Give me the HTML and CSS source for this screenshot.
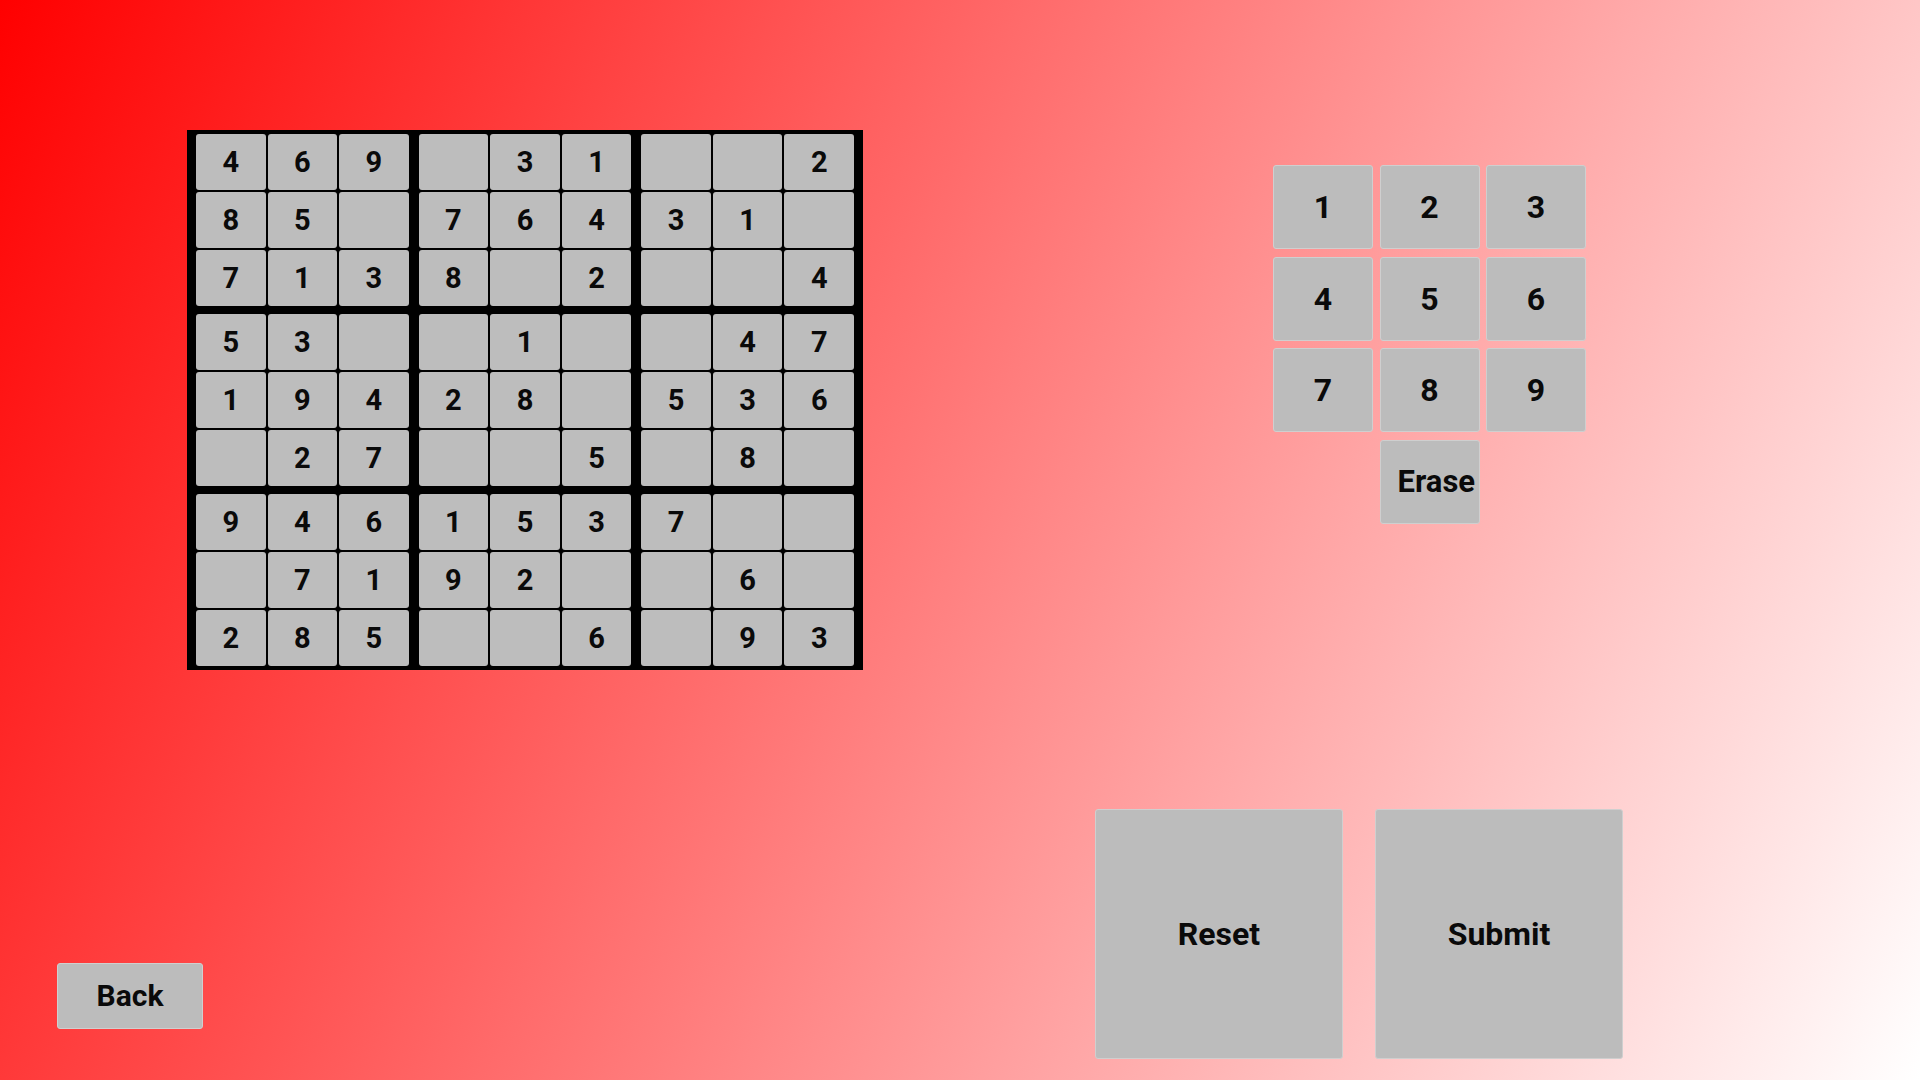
FILE: index.html
```html
<!DOCTYPE html>
<html>
<head>
<meta charset="utf-8">
<title>Sudoku</title>
<link rel="stylesheet" href="styles.css">
</head>
<body>
<div class="screen">
  <div class="top">
    <div class="board">
      <div class="box">
        <div class="cell">4</div><div class="cell">6</div><div class="cell">9</div>
        <div class="cell">8</div><div class="cell">5</div><div class="cell"></div>
        <div class="cell">7</div><div class="cell">1</div><div class="cell">3</div>
      </div>
      <div class="box">
        <div class="cell"></div><div class="cell">3</div><div class="cell">1</div>
        <div class="cell">7</div><div class="cell">6</div><div class="cell">4</div>
        <div class="cell">8</div><div class="cell"></div><div class="cell">2</div>
      </div>
      <div class="box">
        <div class="cell"></div><div class="cell"></div><div class="cell">2</div>
        <div class="cell">3</div><div class="cell">1</div><div class="cell"></div>
        <div class="cell"></div><div class="cell"></div><div class="cell">4</div>
      </div>
      <div class="box">
        <div class="cell">5</div><div class="cell">3</div><div class="cell"></div>
        <div class="cell">1</div><div class="cell">9</div><div class="cell">4</div>
        <div class="cell"></div><div class="cell">2</div><div class="cell">7</div>
      </div>
      <div class="box">
        <div class="cell"></div><div class="cell">1</div><div class="cell"></div>
        <div class="cell">2</div><div class="cell">8</div><div class="cell"></div>
        <div class="cell"></div><div class="cell"></div><div class="cell">5</div>
      </div>
      <div class="box">
        <div class="cell"></div><div class="cell">4</div><div class="cell">7</div>
        <div class="cell">5</div><div class="cell">3</div><div class="cell">6</div>
        <div class="cell"></div><div class="cell">8</div><div class="cell"></div>
      </div>
      <div class="box">
        <div class="cell">9</div><div class="cell">4</div><div class="cell">6</div>
        <div class="cell"></div><div class="cell">7</div><div class="cell">1</div>
        <div class="cell">2</div><div class="cell">8</div><div class="cell">5</div>
      </div>
      <div class="box">
        <div class="cell">1</div><div class="cell">5</div><div class="cell">3</div>
        <div class="cell">9</div><div class="cell">2</div><div class="cell"></div>
        <div class="cell"></div><div class="cell"></div><div class="cell">6</div>
      </div>
      <div class="box">
        <div class="cell">7</div><div class="cell"></div><div class="cell"></div>
        <div class="cell"></div><div class="cell">6</div><div class="cell"></div>
        <div class="cell"></div><div class="cell">9</div><div class="cell">3</div>
      </div>
    </div>
    <div class="keypad">
      <div class="key">1</div><div class="key">2</div><div class="key">3</div>
      <div class="key">4</div><div class="key">5</div><div class="key">6</div>
      <div class="key">7</div><div class="key">8</div><div class="key">9</div>
      <div class="key erase">Erase</div>
    </div>
  </div>
  <div class="bottom">
    <div class="btn back">Back</div>
    <div class="actions">
      <div class="btn big">Reset</div>
      <div class="btn big">Submit</div>
    </div>
  </div>
</div>
</body>
</html>
```
FILE: styles.css
```css
html, body {
  margin: 0;
  padding: 0;
}
body {
  width: 1920px;
  height: 1080px;
  overflow: hidden;
  font-family: Roboto, "Liberation Sans", sans-serif;
  font-weight: 700;
  color: #0a0a0a;
  background: linear-gradient(117deg, #ff0000 0%, #ffffff 100%);
}
.screen {
  height: 1080px;
  display: flex;
  flex-direction: column;
}
.top {
  display: flex;
  align-items: flex-start;
  padding-top: 130px;
  padding-left: 187px;
}
.board {
  box-sizing: border-box;
  width: 676px;
  height: 540px;
  background: #000;
  padding: 4px 9px 4px 9px;
  display: grid;
  grid-template-columns: repeat(3, 1fr);
  grid-template-rows: repeat(3, 1fr);
  column-gap: 10px;
  row-gap: 8px;
}
.box {
  display: grid;
  grid-template-columns: repeat(3, 1fr);
  grid-template-rows: repeat(3, 1fr);
  gap: 2px;
}
.cell {
  background: #bdbdbd;
  border-radius: 3px;
  display: flex;
  align-items: center;
  justify-content: center;
  font-size: 29px;
  line-height: 1;
}
.keypad {
  margin-left: 410px;
  margin-top: 35px;
  display: grid;
  grid-template-columns: repeat(3, 100px);
  grid-template-rows: repeat(4, 84px);
  column-gap: 6.5px;
  row-gap: 7.5px;
}
.key {
  box-sizing: border-box;
  background: #bcbcbc;
  border: 1px solid #cfcfcf;
  border-radius: 3px;
  display: flex;
  align-items: center;
  justify-content: center;
  font-size: 32px;
  line-height: 1;
}
.key.erase {
  grid-column: 2;
  grid-row: 4;
  justify-content: flex-start;
  padding-left: 17px;
  white-space: nowrap;
  font-size: 31px;
}
.bottom {
  margin-top: auto;
  display: flex;
  align-items: flex-end;
}
.btn {
  box-sizing: border-box;
  background: #bcbcbc;
  border: 1px solid #cfcfcf;
  border-radius: 3px;
  display: flex;
  align-items: center;
  justify-content: center;
  line-height: 1;
}
.back {
  width: 146px;
  height: 66px;
  margin-left: 57px;
  margin-bottom: 51px;
  font-size: 30px;
}
.actions {
  display: flex;
  gap: 32px;
  margin-left: 892px;
  margin-bottom: 21px;
}
.big {
  width: 248px;
  height: 250px;
  font-size: 32px;
}
```
